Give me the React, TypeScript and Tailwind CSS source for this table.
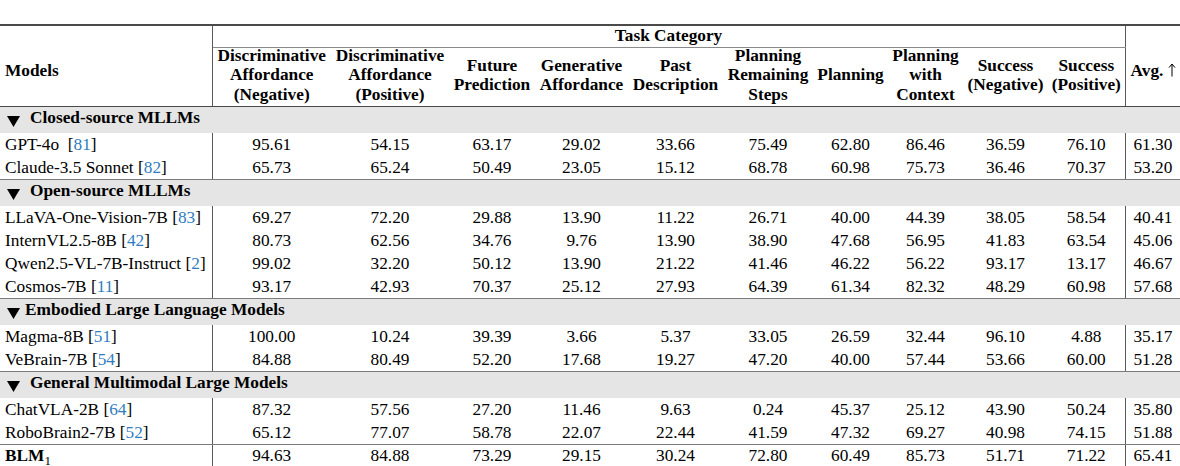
import React from "react";

type Row = { name: string; cite?: string; gap?: boolean; vals: string[]; avg: string };
type Group = { title: string; tight?: boolean; rows: Row[] };

const groups: Group[] = [
  {
    title: "Closed-source MLLMs",
    rows: [
      { name: "GPT-4o", gap: true, cite: "81", vals: ["95.61", "54.15", "63.17", "29.02", "33.66", "75.49", "62.80", "86.46", "36.59", "76.10"], avg: "61.30" },
      { name: "Claude-3.5 Sonnet", cite: "82", vals: ["65.73", "65.24", "50.49", "23.05", "15.12", "68.78", "60.98", "75.73", "36.46", "70.37"], avg: "53.20" },
    ],
  },
  {
    title: "Open-source MLLMs",
    rows: [
      { name: "LLaVA-One-Vision-7B", cite: "83", vals: ["69.27", "72.20", "29.88", "13.90", "11.22", "26.71", "40.00", "44.39", "38.05", "58.54"], avg: "40.41" },
      { name: "InternVL2.5-8B", cite: "42", vals: ["80.73", "62.56", "34.76", "9.76", "13.90", "38.90", "47.68", "56.95", "41.83", "63.54"], avg: "45.06" },
      { name: "Qwen2.5-VL-7B-Instruct", cite: "2", vals: ["99.02", "32.20", "50.12", "13.90", "21.22", "41.46", "46.22", "56.22", "93.17", "13.17"], avg: "46.67" },
      { name: "Cosmos-7B", cite: "11", vals: ["93.17", "42.93", "70.37", "25.12", "27.93", "64.39", "61.34", "82.32", "48.29", "60.98"], avg: "57.68" },
    ],
  },
  {
    title: "Embodied Large Language Models",
    tight: true,
    rows: [
      { name: "Magma-8B", cite: "51", vals: ["100.00", "10.24", "39.39", "3.66", "5.37", "33.05", "26.59", "32.44", "96.10", "4.88"], avg: "35.17" },
      { name: "VeBrain-7B", cite: "54", vals: ["84.88", "80.49", "52.20", "17.68", "19.27", "47.20", "40.00", "57.44", "53.66", "60.00"], avg: "51.28" },
    ],
  },
  {
    title: "General Multimodal Large Models",
    rows: [
      { name: "ChatVLA-2B", cite: "64", vals: ["87.32", "57.56", "27.20", "11.46", "9.63", "0.24", "45.37", "25.12", "43.90", "50.24"], avg: "35.80" },
      { name: "RoboBrain2-7B", cite: "52", vals: ["65.12", "77.07", "58.78", "22.07", "22.44", "41.59", "47.32", "69.27", "40.98", "74.15"], avg: "51.88" },
    ],
  },
];

const headers: string[][] = [
  ["Discriminative", "Affordance", "(Negative)"],
  ["Discriminative", "Affordance", "(Positive)"],
  ["Future", "Prediction"],
  ["Generative", "Affordance"],
  ["Past", "Description"],
  ["Planning", "Remaining", "Steps"],
  ["Planning"],
  ["Planning", "with", "Context"],
  ["Success", "(Negative)"],
  ["Success", "(Positive)"],
];

const widths = ["w-[119px]", "w-[118px]", "w-[86px]", "w-[93px]", "w-[95px]", "w-[90px]", "w-[75px]", "w-[75px]", "w-[85px]", "w-[77px]"];

function Tri() {
  return (
    <svg width="13" height="11" viewBox="0 0 13 11" className="inline-block align-[-4px]">
      <polygon points="0,0 13,0 6.5,11" fill="#000" />
    </svg>
  );
}

function UpArrow() {
  return (
    <svg width="8" height="14" viewBox="0 0 8 14" className="inline-block align-[-1px]">
      <path d="M4 13.5V1.2M1 4.6L4 1 7 4.6" fill="none" stroke="#000" strokeWidth="1" />
    </svg>
  );
}

function DataRow({ r, last }: { r: Row; last: boolean }) {
  const b = last ? "border-b border-b-[#7a7a7a]" : "";
  return (
    <tr>
      <td className={`h-[23px] pl-[5px] pr-[4px] text-left whitespace-pre border-r border-r-[#5a5a5a] ${b}`}>
        {r.name}
        {r.gap ? "  " : " "}[<span className="text-[#2f7dc0]">{r.cite}</span>]
      </td>
      {r.vals.map((v, i) => (
        <td key={i} className={`px-[4px] text-center ${b}`}>
          {v}
        </td>
      ))}
      <td className={`px-[4px] text-center border-l border-l-[#5a5a5a] ${b}`}>{r.avg}</td>
    </tr>
  );
}

export default function App() {
  return (
    <div className="w-[1180px] bg-white pt-[24px] font-['Liberation_Serif',serif] text-[17.3px] leading-[23px] text-black">
      <table className="w-[1180px] table-fixed border-collapse">
        <colgroup>
          <col className="w-[212px]" />
          {widths.map((w, i) => (
            <col key={i} className={w} />
          ))}
          <col className="w-[55px]" />
        </colgroup>
        <thead>
          <tr className="border-t-2 border-t-[#4a4a4a]">
            <td
              rowSpan={2}
              className="pl-[5px] pt-[10px] align-middle font-bold leading-[20px] border-r border-r-[#5a5a5a] border-b border-b-[#4a4a4a]"
            >
              Models
            </td>
            <td colSpan={10} className="h-[21px] pb-[2px] text-center font-bold leading-[19px] border-b border-b-[#8a8a8a]">
              Task Category
            </td>
            <td
              rowSpan={2}
              className="pl-[5px] pt-[10px] align-middle leading-[20px] border-l border-l-[#5a5a5a] border-b border-b-[#4a4a4a] whitespace-nowrap"
            >
              <span className="font-bold">Avg.</span> <UpArrow />
            </td>
          </tr>
          <tr>
            {headers.map((h, i) => (
              <td key={i} className="h-[59px] p-0 text-center align-middle font-bold leading-[19.5px] whitespace-nowrap border-b border-b-[#4a4a4a]">
                <div className="-mt-[4px]">
                  {h.map((l, j) => (
                    <div key={j}>{l}</div>
                  ))}
                </div>
              </td>
            ))}
          </tr>
        </thead>
        <tbody>
          {groups.map((g, gi) => (
            <React.Fragment key={gi}>
              <tr className="bg-[#e5e5e5]">
                <td colSpan={12} className="h-[26.5px] pb-[4px] leading-[22px] font-bold whitespace-nowrap">
                  <span className="ml-[7px]">
                    <Tri />
                  </span>
                  <span className={g.tight ? "ml-[5px]" : "ml-[10px]"}>{g.title}</span>
                </td>
              </tr>
              {g.rows.map((r, ri) => (
                <DataRow key={ri} r={r} last={ri === g.rows.length - 1} />
              ))}
            </React.Fragment>
          ))}
          <tr>
            <td className="h-[22px] pl-[5px] text-left font-bold leading-[22px] border-r border-r-[#5a5a5a] whitespace-nowrap">
              BLM<sub className="text-[13px] font-normal align-[-1px] leading-[10px]">1</sub>
            </td>
            {["94.63", "84.88", "73.29", "29.15", "30.24", "72.80", "60.49", "85.73", "51.71", "71.22"].map((v, i) => (
              <td key={i} className="px-[4px] text-center leading-[22px]">
                {v}
              </td>
            ))}
            <td className="px-[4px] text-center leading-[22px] border-l border-l-[#5a5a5a]">65.41</td>
          </tr>
        </tbody>
      </table>
    </div>
  );
}
